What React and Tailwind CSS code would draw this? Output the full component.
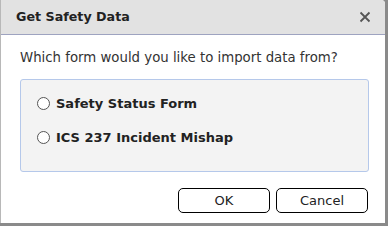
export default function App() {
  return (
    <div className="w-[388px] h-[226px] bg-[#8a8a8a] font-['DejaVu_Sans',sans-serif]">
      <div className="w-[385px] h-[223px] bg-white border-l border-[#b8b8b8] rounded-tr-[4px] flex flex-col overflow-hidden">
        {/* Title bar */}
        <div className="h-[35px] bg-[#e2e2e2] border-b border-[#9ea3c0] flex items-center justify-between pl-[15px] pr-[14px] shrink-0">
          <span className="text-[12.7px] font-bold text-[#222]">Get Safety Data</span>
          <svg width="12" height="12" viewBox="0 0 12 12" className="text-[#555]">
            <path d="M1.5 1.5 L10.5 10.5 M10.5 1.5 L1.5 10.5" stroke="currentColor" strokeWidth="1.8" />
          </svg>
        </div>

        {/* Body */}
        <div className="flex flex-col pl-[19px] pr-[17px] pt-[13px]">
          <p className="text-[13.3px] text-[#333] leading-[20px]">Which form would you like to import data from?</p>

          <div className="mt-[11px] w-[349px] h-[93px] bg-[#f3f3f3] border border-[#b5c8ea] rounded-[3px] flex flex-col pl-[16px] pt-[15px] gap-[17px]">
            {['Safety Status Form', 'ICS 237 Incident Mishap'].map((label) => (
              <label key={label} className="flex items-center gap-[6px] h-[17px]">
                <span className="w-[13px] h-[13px] rounded-full border border-[#555] bg-white shrink-0" />
                <span className="text-[13px] font-bold text-[#222]">{label}</span>
              </label>
            ))}
          </div>

          <div className="flex justify-end gap-[6px] mt-[16px]">
            <button className="w-[92px] h-[25px] border border-black rounded-[5px] bg-white text-[13px] text-[#222]">OK</button>
            <button className="w-[92px] h-[25px] border border-black rounded-[5px] bg-white text-[13px] text-[#222]">Cancel</button>
          </div>
        </div>
      </div>
    </div>
  );
}
